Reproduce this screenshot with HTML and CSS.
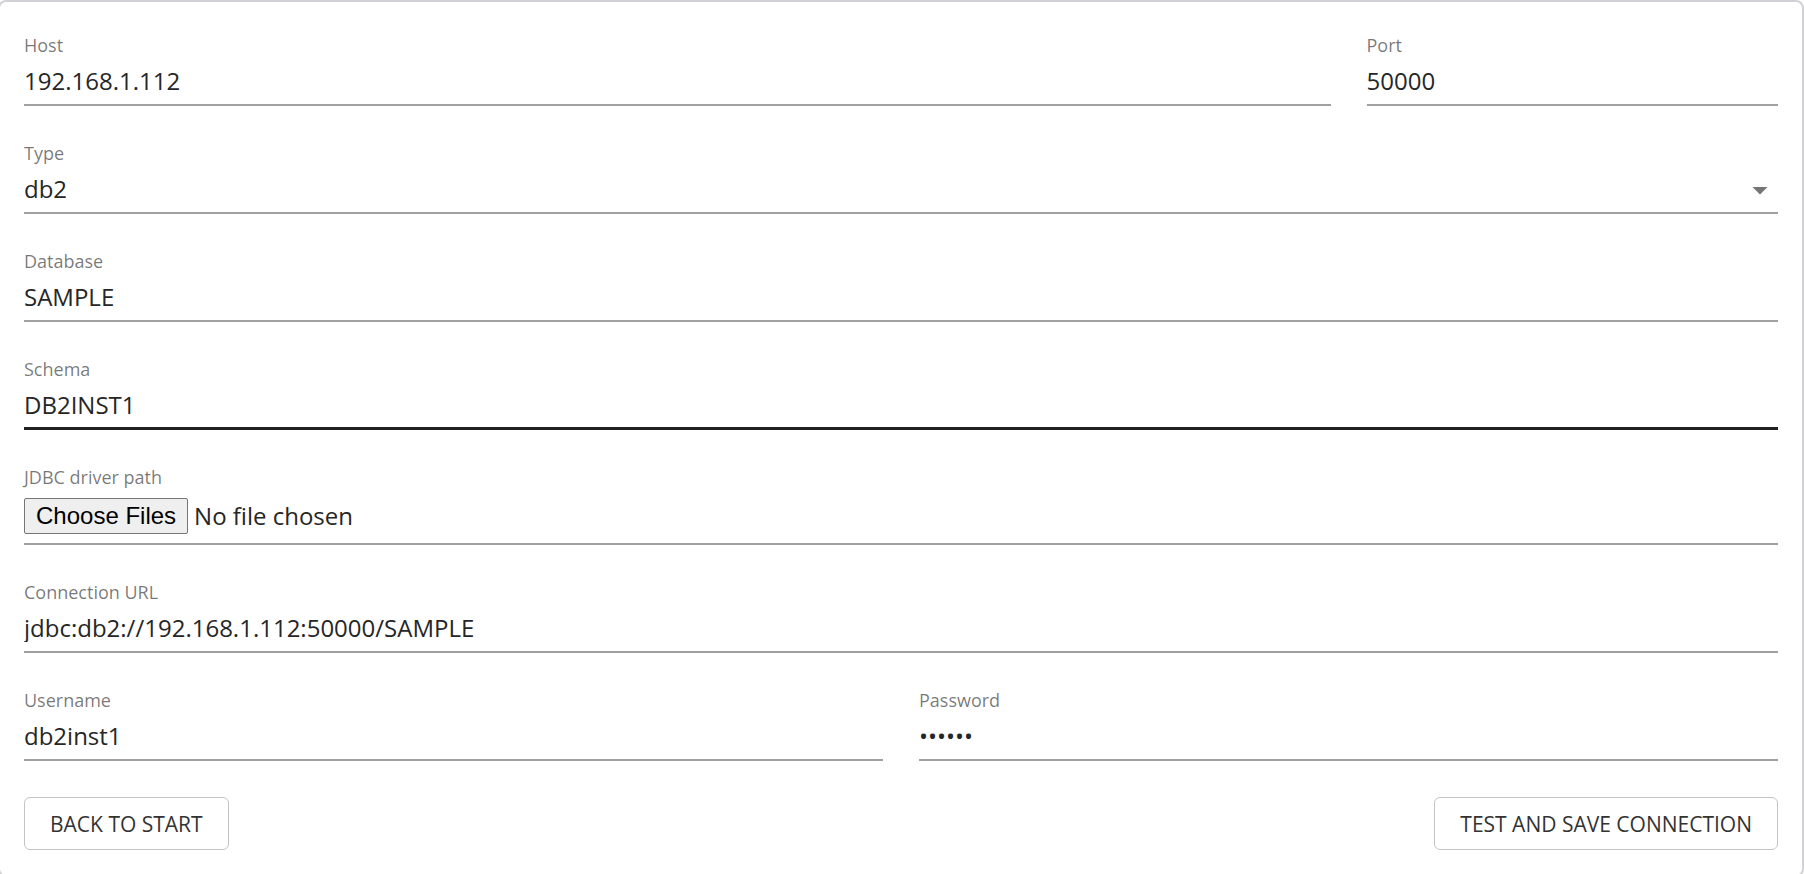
FILE: index.html
```html
<!DOCTYPE html>
<html lang="en">
<head>
<meta charset="utf-8">
<title>Connection</title>
<link rel="stylesheet" href="styles.css">
</head>
<body>
<form class="card">
  <div class="row row-host">
    <div class="field">
      <label class="label">Host</label>
      <div class="control"><input class="input" type="text" value="192.168.1.112" readonly></div>
    </div>
    <div class="field">
      <label class="label">Port</label>
      <div class="control"><input class="input" type="text" value="50000" readonly></div>
    </div>
  </div>

  <div class="field">
    <label class="label">Type</label>
    <div class="control control-select">
      <span class="select-value">db2</span>
      <svg class="select-arrow" viewBox="0 0 24 24" width="36" height="36"><path d="M7 10l5 5 5-5z" fill="#757575"/></svg>
    </div>
  </div>

  <div class="field">
    <label class="label">Database</label>
    <div class="control"><input class="input" type="text" value="SAMPLE" readonly></div>
  </div>

  <div class="field">
    <label class="label">Schema</label>
    <div class="control control-focused"><input class="input" type="text" value="DB2INST1" readonly></div>
  </div>

  <div class="field">
    <label class="label">JDBC driver path</label>
    <div class="control control-file"><input class="file" type="file" multiple></div>
  </div>

  <div class="field">
    <label class="label">Connection URL</label>
    <div class="control"><input class="input" type="text" value="jdbc:db2://192.168.1.112:50000/SAMPLE" readonly></div>
  </div>

  <div class="row row-half">
    <div class="field">
      <label class="label">Username</label>
      <div class="control"><input class="input" type="text" value="db2inst1" readonly></div>
    </div>
    <div class="field">
      <label class="label">Password</label>
      <div class="control"><input class="input" type="password" value="123456" readonly></div>
    </div>
  </div>

  <div class="actions">
    <button type="button" class="btn">Back to start</button>
    <button type="button" class="btn">Test and save connection</button>
  </div>
</form>
</body>
</html>
```

FILE: styles.css
```css
html, body {
  margin: 0;
  padding: 0;
  background: #ffffff;
  overflow: hidden;
}

body {
  font-family: "Open Sans", "Noto Sans", sans-serif;
  color: #212121;
}

.card {
  box-sizing: border-box;
  width: 1806px;
  height: 877px;
  margin-left: -2px;
  border: 2px solid #d2d2d6;
  border-radius: 8px;
  padding: 34px 24px 0 24px;
  display: flex;
  flex-direction: column;
  gap: 38px;
  background: #fff;
}

.row {
  display: grid;
  column-gap: 36px;
}

.row-host {
  grid-template-columns: 1fr calc(25% - 27px);
}

.row-half {
  grid-template-columns: 1fr 1fr;
}

.field {
  display: flex;
  flex-direction: column;
  min-width: 0;
}

.label {
  display: block;
  font-size: 18px;
  line-height: 18px;
  height: 18px;
  color: rgba(0, 0, 0, 0.54);
  white-space: nowrap;
}

.control {
  padding: 13px 0 9px;
  border-bottom: 2px solid #a0a0a0;
  display: flex;
  align-items: center;
}

.control-focused {
  padding-bottom: 8px;
  border-bottom: 3px solid #212121;
}

.input {
  flex: 1;
  min-width: 0;
  box-sizing: border-box;
  height: 28px;
  margin: 0;
  padding: 0;
  border: 0;
  outline: none;
  background: transparent;
  font-family: "Open Sans", "Noto Sans", sans-serif;
  font-size: 24px;
  line-height: 28px;
  color: #262626;
}

.select-value {
  flex: 1;
  font-size: 24px;
  line-height: 28px;
  color: #262626;
}

.select-arrow {
  display: block;
  flex: none;
  margin: -3px 0 -5px;
}

.control-file {
  padding: 12px 0 9px;
}

.file {
  height: 36px;
  margin: 0;
  padding: 0;
  font-family: "Open Sans", "Noto Sans", sans-serif;
  font-size: 24px;
  line-height: 36px;
  color: #262626;
}

.file::file-selector-button {
  box-sizing: border-box;
  height: 36px;
  margin: 0 6px 0 0;
  padding: 0 11px;
  font-family: "Liberation Sans", Arial, sans-serif;
  font-size: 24px;
  color: #000;
  background: #efefef;
  border: 1px solid #767676;
  border-radius: 2px;
  vertical-align: top;
}

.actions {
  display: flex;
  justify-content: space-between;
  margin-top: -2px;
}

.btn {
  box-sizing: border-box;
  height: 53px;
  padding: 0 25px;
  background: #fff;
  border: 1.5px solid #c4c4c4;
  border-radius: 6px;
  font-family: "Open Sans", "Noto Sans", sans-serif;
  font-size: 21px;
  text-transform: uppercase;
  color: #333;
  cursor: pointer;
}
```
